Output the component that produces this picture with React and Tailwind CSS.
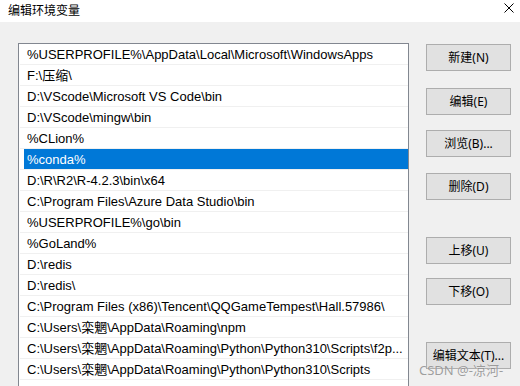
import React from "react";

const rows = [
  "%USERPROFILE%\\AppData\\Local\\Microsoft\\WindowsApps",
  "F:\\压缩\\",
  "D:\\VScode\\Microsoft VS Code\\bin",
  "D:\\VScode\\mingw\\bin",
  "%CLion%",
  "%conda%",
  "D:\\R\\R2\\R-4.2.3\\bin\\x64",
  "C:\\Program Files\\Azure Data Studio\\bin",
  "%USERPROFILE%\\go\\bin",
  "%GoLand%",
  "D:\\redis",
  "D:\\redis\\",
  "C:\\Program Files (x86)\\Tencent\\QQGameTempest\\Hall.57986\\",
  "C:\\Users\\栾魍\\AppData\\Roaming\\npm",
  "C:\\Users\\栾魍\\AppData\\Roaming\\Python\\Python310\\Scripts\\f2p...",
  "C:\\Users\\栾魍\\AppData\\Roaming\\Python\\Python310\\Scripts",
];

const SELECTED = 5;

const Btn = ({ children, className = "" }) => (
  <button className={`h-[27px] w-[85px] border border-[#adadad] bg-[#e1e1e1] text-[12px] text-black ${className}`}>
    {children}
  </button>
);

export default function App() {
  return (
    <div
      className="relative w-[520px] h-[386px] overflow-hidden bg-[#f0f0f0]"
      style={{ fontFamily: '"Noto Sans", "Noto Sans CJK SC", sans-serif' }}
    >
      <div className="h-[22px] bg-white flex items-center justify-between pl-2 pr-[6px]">
        <span className="text-[12px] text-black leading-none">编辑环境变量</span>
        <svg width="10" height="10" viewBox="0 0 10 10" className="mb-[6px]">
          <path d="M0.5 0.5L9.5 9.5M9.5 0.5L0.5 9.5" stroke="#000" strokeWidth="1" />
        </svg>
      </div>

      <div className="flex pl-[18px] pt-[21px] gap-[17px]">
        <div className="w-[391px] h-[400px] border border-[#828790] bg-white overflow-hidden">
          {rows.map((r, i) => (
            <div key={i} className="h-[21px] ml-[1px] border-b border-[#f0f0f0] flex">
              <div
                className={`flex-1 flex items-center pt-[1px] whitespace-nowrap text-[13px] font-['Liberation_Sans','Noto_Sans_CJK_SC',sans-serif] ${
                  i === SELECTED ? "bg-[#0078d7] text-white ml-[4px] pl-[3px]" : "text-black pl-[7px]"
                }`}
              >
                {r}
              </div>
            </div>
          ))}
        </div>

        <div className="flex flex-col items-start pt-[1px]">
          <Btn>新建(N)</Btn>
          <Btn className="mt-[17px]">编辑(E)</Btn>
          <Btn className="mt-[15px]">浏览(B)...</Btn>
          <Btn className="mt-[16px]">删除(D)</Btn>
          <Btn className="mt-[37px]">上移(U)</Btn>
          <Btn className="mt-[14px]">下移(O)</Btn>
          <Btn className="mt-[37px]">编辑文本(T)...</Btn>
        </div>
      </div>

      <div className="absolute left-[419px] top-[364px] text-[13px] leading-none text-[#8a8a8a] opacity-80 whitespace-nowrap [text-shadow:0_0_1px_#fff]">
        CSDN @-凉河-
      </div>
    </div>
  );
}
